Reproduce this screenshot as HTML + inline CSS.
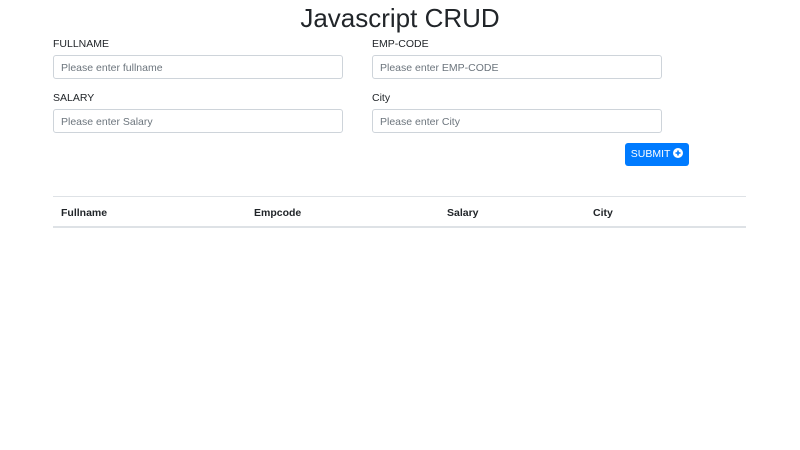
<!DOCTYPE html>
<html><head><style>
body{margin:0;width:800px;height:450px;background:#fff;font-family:"Liberation Sans",sans-serif;color:#212529;position:relative;overflow:hidden}
.a{position:absolute}
h1{position:absolute;left:0;width:800px;top:1px;margin:0;text-align:center;font-weight:400;font-size:26px;line-height:34px}
.l{font-size:10.5px;line-height:14px}
.i{border:1px solid #ced4da;border-radius:3px;height:22px;box-sizing:content-box;font-size:10.5px;color:#6c757d;line-height:24px;padding-left:7px;width:281px}
.btn{background:#007bff;color:#fff;border-radius:3px;font-size:10.5px;line-height:23px;text-align:center;width:64px;height:23px}
.th{font-size:10.5px;font-weight:bold;top:207px}
</style></head><body>
<h1>Javascript CRUD</h1>
<div class="a l" style="left:53px;top:37px">FULLNAME</div>
<div class="a l" style="left:372px;top:37px">EMP-CODE</div>
<div class="a i" style="left:53px;top:55px">Please enter fullname</div>
<div class="a i" style="left:372px;top:55px">Please enter EMP-CODE</div>
<div class="a l" style="left:53px;top:91px">SALARY</div>
<div class="a l" style="left:372px;top:91px">City</div>
<div class="a i" style="left:53px;top:109px">Please enter Salary</div>
<div class="a i" style="left:372px;top:109px">Please enter City</div>
<div class="a btn" style="left:625px;top:143px">SUBMIT <svg width="10" height="10" viewBox="0 0 10 10" style="vertical-align:-1px"><circle cx="5" cy="5" r="5" fill="#fff"/><path d="M5 2.5v5M2.5 5h5" stroke="#007bff" stroke-width="1.6"/></svg></div>
<div class="a" style="left:53px;top:196px;width:693px;height:1px;background:#dee2e6"></div>
<div class="a th" style="left:61px">Fullname</div>
<div class="a th" style="left:254px">Empcode</div>
<div class="a th" style="left:447px">Salary</div>
<div class="a th" style="left:593px">City</div>
<div class="a" style="left:53px;top:226px;width:693px;height:2px;background:#dee2e6"></div>
</body></html>
